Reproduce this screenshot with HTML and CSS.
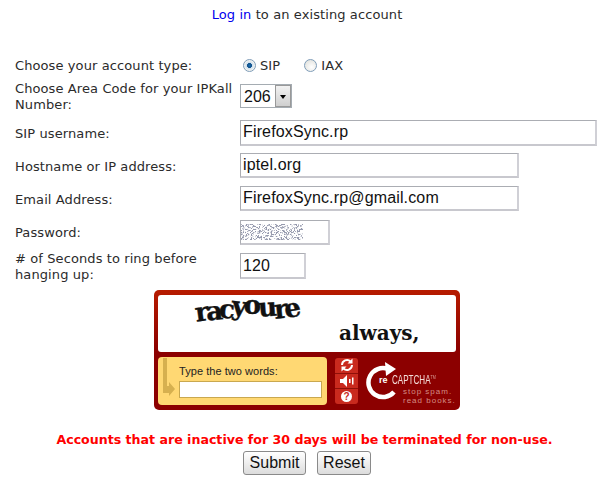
FILE: index.html
```html
<!DOCTYPE html>
<html lang="en">
<head>
    <meta charset="UTF-8">
    <title>IPKall signup</title>
    <link rel="stylesheet" href="styles.css">
</head>
<body>
    <p class="login"><a href="#">Log in</a> to an existing account</p>
    <form class="signup">
        <div class="row row-type">
            <label class="label">Choose your account type:</label>
            <div class="radios">
                <label class="radio"><input type="radio" name="type" checked>SIP</label>
                <label class="radio"><input type="radio" name="type">IAX</label>
            </div>
        </div>
        <div class="row row-area">
            <label class="label">Choose Area Code for your IPKall Number:</label>
            <div class="select-wrap">
                <select class="area"><option>206</option></select>
                <span class="select-btn"></span>
            </div>
        </div>
        <div class="row row-user">
            <label class="label">SIP username:</label>
            <input class="field w-long" type="text" value="FirefoxSync.rp">
        </div>
        <div class="row row-host">
            <label class="label">Hostname or IP address:</label>
            <input class="field w-mid" type="text" value="iptel.org">
        </div>
        <div class="row row-mail">
            <label class="label">Email Address:</label>
            <input class="field w-mid" type="text" value="FirefoxSync.rp@gmail.com">
        </div>
        <div class="row row-pass">
            <label class="label">Password:</label>
            <div class="field w-pass">
                <svg class="smudge" width="62" height="16" viewBox="0 0 62 16">
                    <filter id="noise" x="0" y="0" width="100%" height="100%">
                        <feTurbulence type="fractalNoise" baseFrequency="0.6" numOctaves="3" seed="11"/>
                        <feColorMatrix values="0 0 0 0 0.3  0 0 0 0 0.32  0 0 0 0 0.42  7 0 0 0 -3.4"/>
                    </filter>
                    <rect width="62" height="16" filter="url(#noise)"/>
                </svg>
            </div>
        </div>
        <div class="row row-secs">
            <label class="label"># of Seconds to ring before hanging up:</label>
            <input class="field w-secs" type="text" value="120">
        </div>

        <div class="captcha">
            <div class="words">
                <span class="word-one"><i>r</i><i>a</i><i>c</i><i>y</i><i>o</i><i>u</i><i>r</i><i>e</i></span>
                <span class="word-two">always,</span>
            </div>
            <div class="captcha-foot">
                <div class="answer">
                    <svg class="hook" width="14" height="46" viewBox="0 0 14 46">
                        <path d="M2 0h4v28h2v-4l6 7-6 7v-3H2z" fill="#d6b04f"/>
                    </svg>
                    <div class="answer-box">
                        <div class="answer-label">Type the two words:</div>
                        <input class="answer-input" type="text">
                    </div>
                </div>
                <div class="tools">
                    <div class="tool">
                        <svg width="14" height="14" viewBox="0 0 14 14" fill="none" stroke="#fff" stroke-width="2">
                            <path d="M2 7a5 5 0 0 1 8.500-3.500"/>
                            <path d="M12 7a5 5 0 0 1-8.500 3.500"/>
                            <path d="M12.500 0.500v5h-5z" fill="#fff" stroke="none"/>
                            <path d="M1.500 13.500v-5h5z" fill="#fff" stroke="none"/>
                        </svg>
                    </div>
                    <div class="tool">
                        <svg width="14" height="12" viewBox="0 0 14 12" fill="#fff">
                            <path d="M0 4h3l4-4v12l-4-4H0z"/>
                            <rect x="9" y="4" width="1.500" height="4"/>
                            <rect x="12" y="2.500" width="1.500" height="7"/>
                        </svg>
                    </div>
                    <div class="tool">
                        <span class="help">?</span>
                    </div>
                </div>
                <div class="logo">
                    <svg class="swirl" width="36" height="38" viewBox="0 0 36 38" fill="none">
                        <path d="M30 30a14.500 14.500 0 1 1-6-23" stroke="#fff" stroke-width="4.500"/>
                        <path d="M21 0l11 7-10 7z" fill="#fff"/>
                    </svg>
                    <div class="logo-text">
                        <div class="brand"><b>re</b><span class="cap">CAPTCHA<sup>TM</sup></span></div>
                        <div class="slogan">stop spam.<br>read books.</div>
                    </div>
                </div>
            </div>
        </div>

        <p class="warning">Accounts that are inactive for 30 days will be terminated for non-use.</p>
        <div class="buttons">
            <button class="btn btn-submit" type="button">Submit</button>
            <button class="btn btn-reset" type="button">Reset</button>
        </div>
    </form>
</body>
</html>
```

FILE: styles.css
```css
html, body { margin: 0; padding: 0; background: #fff; }
body { width: 603px; height: 483px; overflow: hidden; font-family: "DejaVu Sans", Verdana, sans-serif; font-size: 13px; letter-spacing: 0.1px; color: #2b2b2b; }

.login { margin: 0; padding: 7px 0 0 11px; height: 47px; box-sizing: border-box; text-align: center; }
.login a { color: #00e; text-decoration: none; }

.signup { padding-left: 15px; }
.row { display: grid; grid-template-columns: 225px 1fr; align-items: center; }
.label { line-height: 16px; width: 222px; padding-top: 2px; }
.row-type { height: 36px; }
.row-area { height: 36px; margin-top: -5px; }
.row-user { height: 33px; margin-top: 2px; }
.row-host { height: 33px; }
.row-mail { height: 33px; }
.row-pass { height: 34px; }
.row-secs { height: 34px; }

.radios { display: flex; gap: 24px; padding-left: 3px; }
.radio { display: flex; align-items: center; gap: 4px; }
.radio input { appearance: none; margin: 0; width: 13px; height: 13px; border-radius: 50%; border: 1px solid #7f9db9; background: radial-gradient(circle at 60% 65%, #fff, #dcdcd6); box-sizing: border-box; }
.radio input:checked { background: radial-gradient(circle, #1a6fb0 0, #0f4f8a 28%, #cfe0ee 36%, #f4f4f0 70%); }

.select-wrap { position: relative; width: 52px; height: 24px; }
.area { appearance: none; width: 52px; height: 24px; padding: 0 0 0 3px; border: 1px solid #a5acb2; border-radius: 0; background: #fff; font-family: "Liberation Sans", Arial, sans-serif; font-size: 16px; color: #111; }
.select-btn { position: absolute; right: 1px; top: 1px; width: 16px; height: 22px; box-sizing: border-box; border: 1px solid #999; background: linear-gradient(#f2f2f2, #cfcfcf); }
.select-btn::after { content: ""; position: absolute; left: 4px; top: 9px; border: 3px solid transparent; border-top: 4px solid #000; border-bottom: 0; }

.field { box-sizing: border-box; height: 25px; padding: 0 2px; border: 2px solid #c0c0c8; border-width: 1px 2px 2px 1px; border-color: #abadb3 #d0d0d6 #c8c8ce #abadb3; background: #fff; font-family: "Liberation Sans", Arial, sans-serif; font-size: 16px; letter-spacing: 0.15px; color: #111; outline: none; }
.w-long { width: 357px; height: 26px; }
.w-mid { width: 279px; }
.w-pass { width: 90px; display: flex; align-items: center; padding-left: 0; }
.w-secs { width: 66px; height: 26px; }
.smudge { display: block; }

.captcha { width: 306px; height: 120px; margin: 7px 0 0 139px; box-sizing: border-box; padding: 5px 4px; border-radius: 5px; background: linear-gradient(#b71c00, #8c0000 60px); }
.words { position: relative; height: 57px; border-radius: 3px; background: #fff; font-family: "DejaVu Serif", "Liberation Serif", serif; font-weight: bold; color: #111; letter-spacing: 0; }
.word-one { position: absolute; left: 37px; top: -2px; display: flex; font-size: 26px; line-height: 30px; -webkit-text-stroke: 0.4px #111; }
.word-one i { display: block; font-style: normal; margin-right: -3.200px; }
.word-one i:nth-child(1) { transform: translateY(4px) rotate(-8deg); }
.word-one i:nth-child(2) { transform: translateY(3px) rotate(-4deg); }
.word-one i:nth-child(3) { transform: translateY(1px) rotate(4deg); }
.word-one i:nth-child(4) { transform: translateY(-2px) rotate(6deg); }
.word-one i:nth-child(5) { transform: translateY(-3px); }
.word-one i:nth-child(6) { transform: translateY(-1px) rotate(-4deg); }
.word-one i:nth-child(7) { transform: translateY(1px) rotate(-6deg); }
.word-one i:nth-child(8) { transform: translateY(0) rotate(-10deg); }
.word-two { position: absolute; left: 181px; top: 25px; font-size: 20px; line-height: 26px; }

.captcha-foot { display: flex; margin-top: 5px; height: 48px; }
.answer { display: flex; width: 169px; box-sizing: border-box; padding: 1px 5px 0 3px; border-radius: 4px; background: #ffd873; }
.hook { flex: none; }
.answer-box { margin-left: 4px; flex: 1; }
.answer-label { font-family: "Liberation Sans", Arial, sans-serif; font-size: 11px; letter-spacing: 0.05px; line-height: 12px; margin-top: 7px; color: #222; }
.answer-input { display: block; box-sizing: border-box; width: 143px; height: 17px; margin-top: 4px; padding: 0; border: 1px solid #c9a84f; background: #fff; }

.tools { display: flex; flex-direction: column; width: 23px; height: 46px; margin: 1px 0 0 8px; border-radius: 3px; background: #c92a1e; }
.tool { display: flex; flex: 1; align-items: center; justify-content: center; border-top: 1px solid #8e1008; }
.tool:first-child { border-top: 0; }
.help { width: 11px; height: 11px; border-radius: 50%; background: #fff; color: #c92a1e; font: bold 10px/11px "Liberation Sans", Arial, sans-serif; text-align: center; }

.logo { display: flex; margin-left: 6px; padding-top: 5px; }
.swirl { flex: none; }
.logo-text { margin-left: -21px; padding-top: 12px; font-family: "Liberation Sans", Arial, sans-serif; letter-spacing: 0; }
.brand { display: flex; align-items: center; height: 12px; font-size: 13px; line-height: 12px; color: #f4dcd8; white-space: nowrap; }
.brand b { font-size: 9px; color: #fff; margin-right: 3px; width: 10px; }
.cap { display: block; transform: scaleX(0.62); transform-origin: left; width: 37px; }
.brand sup { font-size: 6px; line-height: 0; vertical-align: 5px; color: #d89a94; }
.slogan { margin: 1px 0 0 24px; font-size: 8px; line-height: 9px; letter-spacing: 1px; color: #d48c84; white-space: nowrap; }

.warning { margin: 22px 0 0; width: 579px; text-align: center; color: #f00; font-weight: bold; font-size: 12.600px; letter-spacing: 0; line-height: 16px; }
.buttons { display: flex; gap: 11px; justify-content: center; width: 584px; margin-top: 3px; }
.btn { box-sizing: border-box; height: 24px; padding: 0; border: 1px solid #8a8a8a; border-radius: 3px; background: linear-gradient(#fff, #f0f0f0 45%, #dcdcdc); font-family: "Liberation Sans", Arial, sans-serif; font-size: 16px; color: #111; }
.btn-submit { width: 63px; }
.btn-reset { width: 54px; }
```
